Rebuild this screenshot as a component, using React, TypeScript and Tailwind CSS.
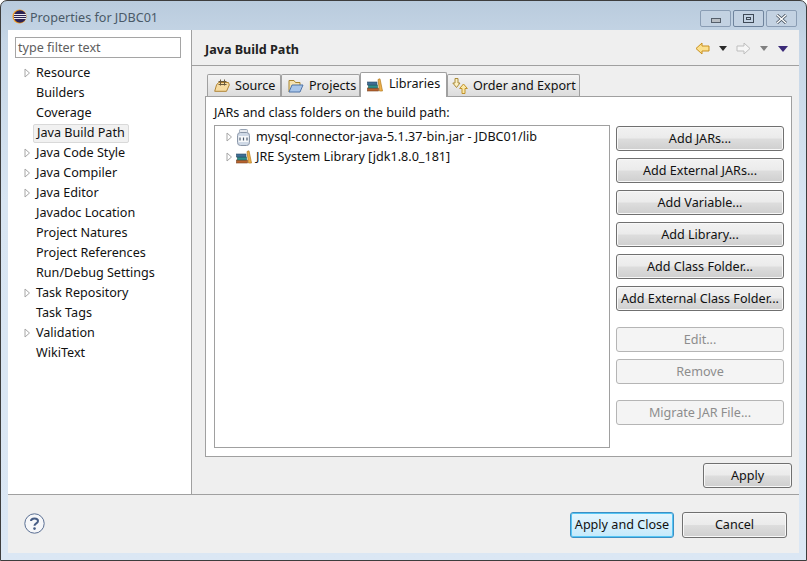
import React from 'react'

const treeItems = [
  { label: 'Resource', arrow: true },
  { label: 'Builders' },
  { label: 'Coverage' },
  { label: 'Java Build Path', selected: true },
  { label: 'Java Code Style', arrow: true },
  { label: 'Java Compiler', arrow: true },
  { label: 'Java Editor', arrow: true },
  { label: 'Javadoc Location' },
  { label: 'Project Natures' },
  { label: 'Project References' },
  { label: 'Run/Debug Settings' },
  { label: 'Task Repository', arrow: true },
  { label: 'Task Tags' },
  { label: 'Validation', arrow: true },
  { label: 'WikiText' },
]

function Arrow() {
  return (
    <svg width="7" height="10" viewBox="0 0 7 10" className="shrink-0">
      <path d="M1 1 L5.5 5 L1 9 Z" fill="#fff" stroke="#a6a6a6" />
    </svg>
  )
}

function Books() {
  return (
    <svg width="16" height="14" viewBox="0 0 16 14" className="shrink-0">
      <rect x="0.5" y="10" width="11" height="3" fill="#b8622e" stroke="#7a4420" strokeWidth="0.6" />
      <rect x="1.5" y="7" width="9" height="3" fill="#2f8f8a" stroke="#22605c" strokeWidth="0.6" />
      <rect x="0.5" y="4" width="9.5" height="3" fill="#3f6f96" stroke="#2b4b68" strokeWidth="0.6" />
      <path d="M11 1.5 L13 0.8 L15.5 13 L12.5 13 Z" fill="#eeb04a" stroke="#b27a1e" strokeWidth="0.7" />
    </svg>
  )
}

function Jar() {
  return (
    <svg width="13" height="17" viewBox="0 0 13 17" className="shrink-0">
      <rect x="2.5" y="0.5" width="8" height="3" rx="1" fill="#e6e9ee" stroke="#98a4b5" />
      <rect x="0.5" y="3.5" width="12" height="13" rx="3" fill="#cfd9e6" stroke="#8b97a8" />
      <rect x="1.5" y="7" width="10" height="6" fill="#f7f9fb" />
      <path d="M3 8.5v3M6.5 8.5v3M10 8.5v3" stroke="#4c5a6e" strokeWidth="1.2" />
    </svg>
  )
}

function SourceIcon() {
  return (
    <svg width="16" height="13" viewBox="0 0 16 13" className="shrink-0">
      <path d="M0.7 12.3 L2.5 6 L4.5 3.5 H14.5 L15.3 6 L12.5 12.3 Z" fill="#f7dca2" stroke="#b08435" />
      <path d="M6.5 0.5 V6.5 M10.5 0.5 V6.5 M4.5 2.5 H12.5 M4.5 5.5 H12.5" stroke="#6b5a3c" fill="none" />
    </svg>
  )
}

function ProjectsIcon() {
  return (
    <svg width="16" height="14" viewBox="0 0 16 14" className="shrink-0">
      <path d="M1 13 V1.5 H6 L7.5 3.5 H12 V6" fill="#f5e2b0" stroke="#a9852f" />
      <path d="M1 13 L4 6 H15 L12 13 Z" fill="#a9c6ea" stroke="#4f74a8" />
    </svg>
  )
}

function OrderIcon() {
  return (
    <svg width="16" height="16" viewBox="0 0 16 16" className="shrink-0 -ml-[2px]">
      <path d="M3 0.5 H6 V5 H8 L4.5 9.5 L0.8 5 H3 Z" fill="#fbf0c4" stroke="#a98a3a" />
      <path d="M10 15.5 H13 V10.5 H15.4 L11.5 6 L7.6 10.5 H10 Z" fill="#fbe9a8" stroke="#c0932c" />
    </svg>
  )
}

function Tab({ label, icon, selected, width }: { label: string; icon: React.ReactNode; selected?: boolean; width: string }) {
  return (
    <div
      className={`${width} flex items-center gap-[5px] pl-[6px] whitespace-nowrap border border-b-0 border-[#a0a0a0] rounded-t-[2px] ${
        selected ? 'h-[25px] bg-white relative z-10 -mb-px' : 'h-[22px] bg-gradient-to-b from-[#f4f4f4] to-[#dcdcdc]'
      }`}
    >
      {icon}
      <span className={selected ? '-mt-[2px] ml-[1px]' : 'mt-[1px]'}>{label}</span>
    </div>
  )
}

function Btn({ label, disabled, cls }: { label: string; disabled?: boolean; cls?: string }) {
  if (disabled) {
    return (
      <div className={`h-[25px] flex items-center justify-center rounded-[3px] border border-[#b5b5b5] bg-[#f4f4f4] text-[#8d8d8d] ${cls ?? 'w-[168px]'}`}>
        {label}
      </div>
    )
  }
  return (
    <div
      className={`h-[25px] flex items-center justify-center rounded-[3px] border border-[#707070] bg-[linear-gradient(#f2f2f2_0%,#ebebeb_48%,#dddddd_52%,#cfcfcf_100%)] shadow-[inset_0_0_0_1px_#f8f8f8] text-[#111] ${cls ?? 'w-[168px]'}`}
    >
      {label}
    </div>
  )
}

export default function App() {
  return (
    <div
      className="w-[807px] h-[561px] overflow-hidden flex flex-col border border-[#3d3d3d] rounded-t-[7px] bg-[linear-gradient(#b9cbdd_0px,#c6d6e6_40px,#d8e5f2_200px,#dbe7f4_100%)] text-[12.6px] leading-[18px] text-[#111]"
      style={{ fontFamily: '"Noto Sans", "Open Sans", sans-serif' }}
    >
      {/* title bar */}
      <div className="h-[29px] shrink-0 flex pl-[11px] pr-[9px]">
        <div className="flex items-center gap-[3px] pt-[4px] text-[#4a5a68]">
          <svg width="15" height="15" viewBox="0 0 15 15" className="-mt-[2px]">
            <circle cx="7.5" cy="7.5" r="7" fill="#f39c1f" />
            <circle cx="8" cy="7.5" r="6.2" fill="#2c2255" />
            <path d="M2 5.5h12M1.8 7.5h12.4M2 9.5h12" stroke="#fff" strokeWidth="0.9" />
          </svg>
          <span>Properties for JDBC01</span>
        </div>
        <div className="ml-auto flex gap-[2px] pt-[9px] h-[26px]">
          {/* window buttons */}
          <div className="w-[31px] h-[17px] rounded-[2px] border border-[#8a9db4] bg-[#c3d2e2] flex items-center justify-center">
            <div className="w-[10px] h-[5px] mt-[4px] bg-[#b9bec4] border border-[#555f6b]" />
          </div>
          <div className="w-[31px] h-[17px] rounded-[2px] border border-[#6f849d] bg-[#c3d2e2] flex items-center justify-center">
            <div className="w-[11px] h-[9px] border border-[#3f4a57] flex items-center justify-center">
              <div className="w-[5px] h-[3px] border border-[#3f4a57]" />
            </div>
          </div>
          <div className="w-[31px] h-[17px] rounded-[2px] border border-[#8a9db4] bg-[#c3d2e2] flex items-center justify-center">
            <svg width="11" height="10" viewBox="0 0 11 10">
              <path d="M1 1 L10 9 M10 1 L1 9" stroke="#46525f" strokeWidth="3" />
              <path d="M1 1 L10 9 M10 1 L1 9" stroke="#fff" strokeWidth="1.4" />
            </svg>
          </div>
        </div>
      </div>

      {/* client area */}
      <div className="mx-[7px] w-[791px] h-[523px] flex flex-col bg-[#efefef]">
        <div className="h-[465px] flex border-b border-[#a0a0a0]">
          {/* sidebar */}
          <div className="w-[184px] shrink-0 bg-white border-r border-[#a0a0a0] pt-[7px] pl-[7px]">
            <div className="w-[166px] h-[21px] border border-[#a5a5a5] pl-[2px] flex items-center text-[#5e5e5e]">type filter text</div>
            <div className="mt-[5px]">
              {treeItems.map((item) => (
                <div key={item.label} className="h-[20px] flex items-center">
                  <div className="w-[21px] pl-[9px] flex shrink-0">{item.arrow && <Arrow />}</div>
                  <div className={item.selected ? 'h-[19px] flex items-center px-[3px] -ml-[3px] bg-[#f1f1f1] border border-[#d9d9d9] rounded-[2px]' : ''}>
                    {item.label}
                  </div>
                </div>
              ))}
            </div>
          </div>

          {/* main */}
          <div className="flex-1 flex flex-col min-w-0">
            <div className="h-[36px] shrink-0 flex items-center pl-[13px] pr-[11px] border-b border-[#a0a0a0]">
              <span className="font-bold text-[#222] pt-[4px]">Java Build Path</span>
              <div className="ml-auto flex items-center pt-[2px]">
                <svg width="15" height="13" viewBox="0 0 15 13">
                  <path d="M1 6.5 L7 1 V4 H14 V9 H7 V12 Z" fill="#fbe08e" stroke="#c98f1c" />
                </svg>
                <svg width="8" height="5" viewBox="0 0 8 5" className="ml-[9px]"><path d="M0 0h8L4 5z" fill="#2a2a2a" /></svg>
                <svg width="15" height="13" viewBox="0 0 15 13" className="ml-[9px]">
                  <path d="M14 6.5 L8 1 V4 H1 V9 H8 V12 Z" fill="#f6f6f6" stroke="#bdbdbd" />
                </svg>
                <svg width="8" height="5" viewBox="0 0 8 5" className="ml-[9px]"><path d="M0 0h8L4 5z" fill="#808080" /></svg>
                <svg width="10" height="6" viewBox="0 0 10 6" className="ml-[10px]"><path d="M0 0h10L5 6z" fill="#3b2a78" /></svg>
              </div>
            </div>

            <div className="flex-1 flex flex-col pl-[13px] pr-[7px] pt-[7px]">
              {/* tabs */}
              <div className="flex items-end pl-[2px] h-[23px]">
                <Tab label="Source" icon={<SourceIcon />} width="w-[74px]" />
                <Tab label="Projects" icon={<ProjectsIcon />} width="w-[79px]" />
                <Tab label="Libraries" icon={<Books />} selected width="w-[87px]" />
                <Tab label="Order and Export" icon={<OrderIcon />} width="w-[133px]" />
              </div>

              {/* tab panel */}
              <div className="h-[361px] bg-white border border-[#a0a0a0] pl-[8px] pt-[7px]">
                <div className="h-[18px] leading-[18px]">JARs and class folders on the build path:</div>
                <div className="flex mt-[3px]">
                  <div className="w-[396px] h-[323px] border border-[#a0a0a0] pt-[1px] shrink-0">
                    <div className="h-[20px] flex items-center pl-[11px] gap-[3px]">
                      <Arrow />
                      <div className="w-[16px] flex justify-center -ml-[1px]"><Jar /></div>
                      <span className="ml-[2px]">mysql-connector-java-5.1.37-bin.jar - JDBC01/lib</span>
                    </div>
                    <div className="h-[20px] flex items-center pl-[11px] gap-[3px]">
                      <Arrow />
                      <Books />
                      <span className="ml-[1px]">JRE System Library [jdk1.8.0_181]</span>
                    </div>
                  </div>
                  <div className="ml-[6px] flex flex-col pt-[1px]">
                    <Btn label="Add JARs..." />
                    <Btn label="Add External JARs..." cls="w-[168px] mt-[7px]" />
                    <Btn label="Add Variable..." cls="w-[168px] mt-[7px]" />
                    <Btn label="Add Library..." cls="w-[168px] mt-[7px]" />
                    <Btn label="Add Class Folder..." cls="w-[168px] mt-[7px]" />
                    <Btn label="Add External Class Folder..." cls="w-[168px] mt-[7px]" />
                    <Btn label="Edit..." disabled cls="w-[168px] mt-[16px]" />
                    <Btn label="Remove" disabled cls="w-[168px] mt-[7px]" />
                    <Btn label="Migrate JAR File..." disabled cls="w-[168px] mt-[16px]" />
                  </div>
                </div>
              </div>

              <div className="flex justify-end mt-[6px]">
                <Btn label="Apply" cls="w-[89px]" />
              </div>
            </div>
          </div>
        </div>

        {/* bottom bar */}
        <div className="flex-1 flex items-center pl-[16px] pr-[12px]">
          <svg width="21" height="21" viewBox="0 0 21 21" className="-mt-[2px]">
            <circle cx="10.5" cy="10.5" r="9.7" fill="#f6f7f9" stroke="#5a6f93" strokeWidth="1" />
            <path d="M7 8 C7 4.6 14 4.6 14 8 C14 10.4 10.5 10.2 10.5 12.8" fill="none" stroke="#475d85" strokeWidth="2" />
            <circle cx="10.5" cy="15.6" r="1.3" fill="#475d85" />
          </svg>
          <div className="ml-auto flex gap-[8px] mt-[1px]">
            <div className="w-[104px] h-[26px] flex items-center justify-center rounded-[3px] border border-[#3c8fc4] bg-[linear-gradient(#e6f6fe,#c4e9fb)] shadow-[inset_0_0_0_1px_#55c6f5]">
              Apply and Close
            </div>
            <Btn label="Cancel" cls="w-[105px] !h-[26px]" />
          </div>
        </div>
      </div>
    </div>
  )
}
